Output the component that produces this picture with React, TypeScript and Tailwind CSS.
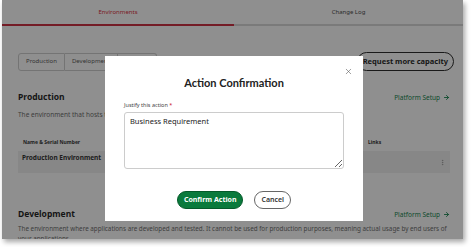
import { X, ArrowRight, EllipsisVertical } from "lucide-react";

// page behind the dialog is drawn already dimmed (as under a 44% black backdrop)
export default function App() {
  return (
    <div className="w-[474px] h-[247px] bg-white overflow-hidden" style={{ fontFamily: "'Noto Sans', 'Open Sans', sans-serif" }}>
      <div className="relative ml-[2px] w-[461px] h-[239px] bg-[#8f8f8f] overflow-hidden shadow-[2px_3px_5px_rgba(0,0,0,0.35)]">
        {/* page */}
        <div className="flex h-[26px] text-[6px]">
          <div className="w-[232px] flex items-center justify-center text-[#7a1a24] border-b-2 border-[#741c26]">Environments</div>
          <div className="flex-1 flex items-center justify-center text-[#2a2a2a] border-b-2 border-[#7a7a7a]">Change Log</div>
        </div>
        <div className="pl-4 pr-[13px]">
          <div className="flex items-center justify-between mt-[26px]">
            <div className="flex text-[6px] text-[#333]">
              <div className="h-[18px] px-[7px] flex items-center border border-[#747474] rounded-l-[3px]">Production</div>
              <div className="h-[18px] px-[7px] flex items-center border border-l-0 border-[#747474]">Development</div>
              <div className="h-[18px] px-[7px] flex items-center border border-l-0 border-[#747474] rounded-r-[3px]">Sandbox</div>
            </div>
            <div className="h-[19px] px-[5px] -mr-[4px] flex items-center rounded-full border border-[#1a1a1a] text-[7.5px] font-bold text-[#161616]">Request more capacity</div>
          </div>
          <div className="flex items-center justify-between mt-[20px]">
            <div className="text-[8.5px] font-bold text-[#151515]">Production</div>
            <div className="flex items-center gap-[3px] text-[6.5px] text-[#0d4a2c]">Platform Setup <ArrowRight size={7} strokeWidth={3} /></div>
          </div>
          <div className="text-[6.5px] text-[#3d3d3d] mt-[6px]">The environment that hosts the applications used by end users.</div>
          <div className="flex text-[5px] font-bold text-[#1c1c1c] mt-[19px] px-[5px]">
            <div className="w-[345px]">Name &amp; Serial Number</div>
            <div>Links</div>
          </div>
          <div className="mt-[5px] h-[22px] bg-[#878787] flex items-center justify-between px-[4px]">
            <div className="text-[6.5px] font-bold text-[#1c1c1c] -mt-[8px]">Production Environment</div>
            <EllipsisVertical size={7} className="text-[#555]" />
          </div>
          <div className="flex items-center justify-between mt-[35px]">
            <div className="text-[8.5px] font-bold text-[#151515]">Development</div>
            <div className="flex items-center gap-[3px] text-[6.5px] text-[#0d4a2c]">Platform Setup <ArrowRight size={7} strokeWidth={3} /></div>
          </div>
          <div className="text-[6.3px] leading-[10px] text-[#3d3d3d] mt-[3px]">The environment where applications are developed and tested. It cannot be used for production purposes, meaning actual usage by end users of your applications.</div>
        </div>

        {/* modal */}
        <div className="absolute left-[103px] top-[56px] w-[258px] h-[165px] bg-white flex flex-col">
          <div className="flex justify-end pt-[11px] pr-[10px]">
            <X size={9} strokeWidth={1.5} className="text-[#555]" />
          </div>
          <div className="text-center text-[11px] font-bold text-[#222] -mt-[1px]" style={{ fontFamily: "Lato, sans-serif" }}>Action Confirmation</div>
          <div className="px-[19px] mt-[9px]">
            <div className="text-[5.5px] text-[#444]">Justify this action <span className="text-[#c8102e]">*</span></div>
            <textarea
              defaultValue="Business Requirement"
              className="mt-[3px] w-full h-[57px] border border-[#ccc] rounded-[3px] px-[5px] py-[3px] text-[7.5px] text-[#222] outline-none resize-y"
            />
          </div>
          <div className="flex justify-center gap-[11px] mt-[16px]">
            <button className="h-[18px] px-[6px] rounded-full bg-[#0a7a3c] border border-[#055a2a] text-white text-[7px] font-bold">Confirm Action</button>
            <button className="h-[18px] px-[6px] rounded-full border border-[#666] text-[#333] text-[7px] font-semibold">Cancel</button>
          </div>
        </div>
      </div>
    </div>
  );
}
